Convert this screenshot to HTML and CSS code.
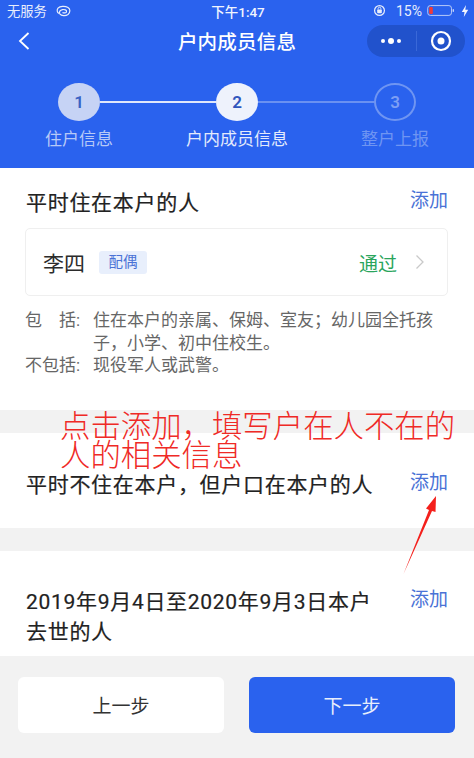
FILE: index.html
```html
<!DOCTYPE html>
<html lang="zh-CN">
<head>
<meta charset="utf-8">
<title>户内成员信息</title>
<link rel="stylesheet" href="styles.css">
</head>
<body>
<div class="page">
  <header class="top">
    <div class="status">
      <div class="status-side">
        <span>无服务</span>
        <svg class="wifi-ish" viewBox="0 0 16 12" width="16" height="12"><path d="M4 8.5C2 7.5 1.600 5 3 3.200C5 1 10 .8 13 2.500C15.500 4 15.500 7.500 13 9.500C10.500 11.300 6.500 11 4.800 8.800C3.800 7 5 5 7.500 4.600C9.500 4.300 12 5 11.500 6.800C11.200 8 9 8.300 7.500 7.500" fill="none" stroke="#e8eefc" stroke-width="1.200"/></svg>
      </div>
      <div class="status-time">下午1:47</div>
      <div class="status-side status-right">
        <svg viewBox="0 0 14 14" width="13" height="13"><circle cx="7" cy="7" r="5.300" fill="none" stroke="#e8eefc" stroke-width="1.300"/><rect x="4.500" y="6" width="5" height="4" rx=".8" fill="#e8eefc"/><path d="M5.500 6V5a1.500 1.500 0 0 1 3 0v1" fill="none" stroke="#e8eefc"/></svg>
        <span class="pct">15%</span>
        <svg viewBox="0 0 30 14" width="28" height="13"><rect x=".7" y="1.700" width="25.600" height="10.600" rx="2.800" fill="none" stroke="#c3d2f8" stroke-width="1"/><rect x="2.200" y="3.200" width="4" height="7.600" rx="1" fill="#ef3b3b"/><rect x="27.500" y="5.500" width="1.500" height="3" rx=".7" fill="#c3d2f8"/></svg>
        <svg class="bolt" viewBox="0 0 8 12" width="8" height="12"><path d="M5 0L.8 7H3.500L2.800 12L7.200 4.800H4.300Z" fill="#f2f5fe"/></svg>
      </div>
    </div>
    <div class="nav">
      <svg class="back" viewBox="0 0 14 20" width="14" height="20"><path d="M11.500 2L3 10L11.500 18" fill="none" stroke="#fff" stroke-width="1.800"/></svg>
      <h1 class="nav-title">户内成员信息</h1>
      <div class="capsule">
        <div class="cap-cell">
          <svg viewBox="0 0 24 8" width="24" height="8"><circle cx="4" cy="4" r="2" fill="#fff"/><circle cx="12" cy="4" r="3" fill="#fff"/><circle cx="20" cy="4" r="2" fill="#fff"/></svg>
        </div>
        <div class="cap-rule"></div>
        <div class="cap-cell">
          <svg viewBox="0 0 22 22" width="22" height="22"><circle cx="11" cy="11" r="9" fill="none" stroke="#fff" stroke-width="2.200"/><circle cx="11" cy="11" r="3.500" fill="#fff"/></svg>
        </div>
      </div>
    </div>
    <div class="track">
      <div class="dot dot-done">1</div>
      <div class="line line-done"></div>
      <div class="dot dot-now">2</div>
      <div class="line line-todo"></div>
      <div class="dot dot-todo">3</div>
    </div>
    <div class="labels">
      <span class="label-done">住户信息</span>
      <span class="label-now">户内成员信息</span>
      <span class="label-todo">整户上报</span>
    </div>
  </header>

  <main>
    <section class="sec sec-first">
      <div class="sec-head">
        <h2 class="sec-title">平时住在本户的人</h2>
        <a class="add">添加</a>
      </div>
      <div class="card">
        <span class="name">李四</span>
        <span class="tag">配偶</span>
        <span class="pass">通过</span>
        <svg class="chev" viewBox="0 0 10 16" width="10" height="16"><path d="M1.500 1.500L8 8L1.500 14.500" fill="none" stroke="#c9c9c9" stroke-width="1.300"/></svg>
      </div>
      <dl class="notes">
        <dt>包<span class="gap"></span>括:</dt>
        <dd>住在本户的亲属、保姆、室友；幼儿园全托孩子，小学、初中住校生。</dd>
        <dt>不包括:</dt>
        <dd>现役军人或武警。</dd>
      </dl>
    </section>
    <section class="sec sec-second">
      <div class="sec-head">
        <h2 class="sec-title">平时不住在本户，但户口在本户的人</h2>
        <a class="add">添加</a>
      </div>
    </section>
    <section class="sec sec-third">
      <div class="sec-head">
        <h2 class="sec-title">2019年9月4日至2020年9月3日本户去世的人</h2>
        <a class="add">添加</a>
      </div>
    </section>
  </main>

  <footer class="foot">
    <button class="btn btn-prev">上一步</button>
    <button class="btn btn-next">下一步</button>
  </footer>

  <div class="note-red">点击添加，填写户在人不在的<br>人的相关信息</div>
  <svg class="arrow" viewBox="0 0 474 758" width="474" height="758"><path d="M403.500 574L429 510L426 508.500L436 496L435.500 512L432 511Z" fill="#f4201c"/></svg>
</div>
</body>
</html>
```
FILE: styles.css
```css
* { box-sizing: border-box; }
html, body { margin: 0; padding: 0; }
body {
  font-family: "Roboto", "Noto Sans CJK SC", sans-serif;
  background: #f2f2f2;
}
.page {
  position: relative;
  width: 474px;
  height: 758px;
  overflow: hidden;
  display: flex;
  flex-direction: column;
}
.top {
  height: 168px;
  background: #2a62ee;
  color: #fff;
  flex: none;
}
.status {
  height: 21px;
  padding: 0 5px 0 7px;
  display: grid;
  grid-template-columns: 1fr auto 1fr;
  align-items: center;
  font-size: 13.300px;
  color: #e8eefc;
}
.status-side { display: flex; align-items: center; gap: 8px; }
.status-right { justify-content: flex-end; gap: 3px; }
.pct { margin: 0 2px 0 7px; font-size: 14px; }
.bolt { margin-left: 3px; }
.status-time { font-weight: 500; font-size: 13.500px; color: #f0f4fe; }
.nav {
  height: 38px;
  margin-top: 4px;
  padding: 0 9px 6px;
  display: grid;
  grid-template-columns: 1fr auto 1fr;
  align-items: center;
}
.back { display: block; margin-left: 8px; }
.nav-title {
  margin: 0 0 2px;
  font-size: 19.500px;
  font-weight: 500;
  letter-spacing: .2px;
}
.capsule {
  justify-self: end;
  width: 98px;
  height: 32px;
  border-radius: 16px;
  background: #2152cc;
  display: flex;
  align-items: center;
}
.cap-cell { flex: 1; display: flex; justify-content: center; align-items: center; }
.cap-cell svg { display: block; }
.cap-rule { width: 1px; height: 20px; background: #3a68d8; }
.track {
  margin-top: 20px;
  padding: 0 58px;
  display: flex;
  align-items: center;
}
.dot {
  width: 42px;
  height: 38px;
  flex: none;
  border-radius: 50%;
  display: flex;
  align-items: center;
  justify-content: center;
  font-size: 17px;
  font-weight: 600;
}
.dot-done { background: #c6d3f5; color: #3b62c4; }
.dot-now { background: #eef2fc; color: #2f55bd; }
.dot-todo { border: 2px solid #6f95f2; color: #7d9ff4; }
.line { flex: 1; height: 2px; }
.line-done { background: #dfe7fb; }
.line-todo { background: #6a91f1; }
.labels {
  margin-top: 7px;
  display: grid;
  grid-template-columns: repeat(3, 1fr);
  text-align: center;
  font-size: 17px;
  line-height: 22px;
}
.label-done { color: #b7c9f7; }
.label-now { color: #e3eafc; }
.label-todo { color: #6f95f2; }

main { flex: none; }
.sec { background: #fff; padding: 0 26px 0 25px; }
.sec-first { height: 242px; padding-top: 20px; margin-bottom: 23px; }
.sec-second { height: 95px; padding-top: 37px; margin-bottom: 23px; }
.sec-third { height: 105px; padding-top: 36px; }
.sec-head { display: flex; justify-content: space-between; align-items: flex-start; }
.sec-title {
  margin: 0 0 0 1px;
  width: 352px;
  font-size: 21px;
  font-weight: 400;
  line-height: 30px;
  letter-spacing: .7px;
  color: #222;
  -webkit-text-stroke: .2px #222;
}
.add { font-size: 19px; line-height: 26px; color: #4a72d6; }
.card {
  margin-top: 10px;
  height: 68px;
  border: 1px solid #efefef;
  border-radius: 5px;
  padding: 0 22px 0 17px;
  display: flex;
  align-items: center;
}
.name { font-size: 21px; color: #2b2b2b; }
.tag {
  margin-left: 14px;
  width: 48px;
  height: 23px;
  border-radius: 3px;
  background: #e8effc;
  color: #4a72d6;
  font-size: 14.500px;
  line-height: 23px;
  text-align: center;
}
.pass { margin-left: auto; font-size: 19px; color: #2aa55c; }
.chev { margin-left: 18px; display: block; }
.notes {
  margin: 13px 0 0;
  display: grid;
  grid-template-columns: 68px 1fr;
  font-size: 17px;
  line-height: 22.500px;
  color: #666;
}
.notes dt { white-space: nowrap; display: flex; }
.notes dd { margin: 0; }
.gap { width: 17px; }
.foot {
  flex: 1;
  padding: 21px 19px 25px 18px;
  display: flex;
  gap: 25px;
}
.btn {
  flex: 1;
  border: 0;
  border-radius: 6px;
  font-family: inherit;
  font-size: 19px;
  padding: 0 0 2px;
}
.btn-prev { background: #fff; color: #333; }
.btn-next { background: #2a62ee; color: #e8eefc; }

.note-red {
  position: absolute;
  left: 60px;
  top: 412px;
  font-size: 30.400px;
  font-weight: 300;
  line-height: 29px;
  color: #ef2a26;
  white-space: nowrap;
}
.arrow { position: absolute; left: 0; top: 0; pointer-events: none; }
```
